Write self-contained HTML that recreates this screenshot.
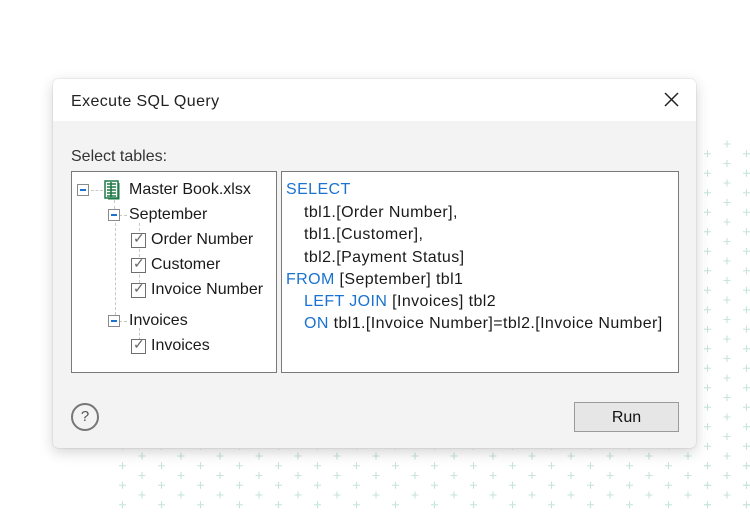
<!DOCTYPE html>
<html><head><style>
body{margin:0;width:750px;height:528px;background:#fff;position:relative;overflow:hidden;font-family:"Liberation Sans",sans-serif;color:#1a1a1a}
.a{position:absolute;white-space:nowrap}
#dlg{position:absolute;left:53px;top:79px;width:643px;height:369px;background:#f3f3f3;border-radius:5px;box-shadow:0 4px 14px rgba(0,0,0,0.18),0 0 1px rgba(0,0,0,0.3);overflow:hidden}
.t{font-size:16px;line-height:20px}
.s{letter-spacing:0.4px}
.kw{color:#1a73d0}
.cb{position:absolute;width:13px;height:13px;border:1px solid #6e6e6e;background:#fff}
.mn{position:absolute;width:10px;height:10px;border:1px solid #8a8a8a;background:#fff}
.mn:after{content:"";position:absolute;left:2px;top:4px;width:6px;height:2px;background:#1a73d0}
.vl{position:absolute;border-left:1px dashed #c8c8c8}
.hl{position:absolute;border-top:1px dashed #c8c8c8}
</style></head><body>
<svg class="a" style="left:0;top:0" width="750" height="528">
<defs><pattern id="p" x="142" y="456" width="39" height="19.5" patternUnits="userSpaceOnUse">
<path d="M-3.5 0H3.5M0 -3.5V3.5M35.5 0H42.5M39 -3.5V3.5M16 9.75H23M19.5 6.25V13.25M-3.5 19.5H3.5M0 16V23M35.5 19.5H42.5M39 16V23" stroke="#c6e3dc" stroke-width="1.1" fill="none"/>
</pattern></defs>
<rect x="698" y="140" width="52" height="370" fill="url(#p)"/>
<rect x="115" y="449" width="635" height="61" fill="url(#p)"/>
</svg>
<div id="dlg">
<div class="a" style="left:0;top:0;width:643px;height:42px;background:#fff"></div>
<div class="a t s" style="left:18px;top:13px;font-size:16px;color:#222">Execute SQL Query</div>
<svg class="a" style="left:611px;top:13px" width="15" height="15"><path d="M1 1L14 14M14 1L1 14" stroke="#222" stroke-width="1.5"/></svg>
<div class="a t" style="left:18px;top:68px;color:#333">Select tables:</div>
<div class="a" style="left:18px;top:92px;width:204px;height:200px;border:1px solid #7a7a7a;background:#fff"></div>
<div class="a" style="left:228px;top:92px;width:396px;height:200px;border:1px solid #7a7a7a;background:#fff"></div>
<div class="a" style="left:521px;top:323px;width:103px;height:28px;border:1px solid #9a9a9a;background:#e6e6e6"></div>
<div class="a t" style="left:521px;top:329px;width:105px;text-align:center;color:#111">Run</div>
<div class="a" style="left:18px;top:324px;width:24px;height:24px;border:2px solid #777;border-radius:50%;text-align:center;font-size:15px;line-height:24px;color:#555">?</div>
</div>
<!-- tree -->
<div class="vl" style="left:114px;top:200px;height:9px"></div>
<div class="vl" style="left:115px;top:223px;height:92px"></div>
<div class="vl" style="left:139px;top:223px;height:65px"></div>
<div class="vl" style="left:139px;top:328px;height:12px"></div>
<div class="hl" style="left:91px;top:190px;width:12px"></div>
<div class="hl" style="left:119px;top:215px;width:8px"></div>
<div class="hl" style="left:119px;top:321px;width:8px"></div>
<div class="mn" style="left:77px;top:184px"></div>
<svg class="a" style="left:104px;top:180px" width="16" height="20"><rect x="1" y="1" width="13" height="17" fill="#fff" stroke="#1e7a45" stroke-width="1.5"/><path d="M3 4h9M3 7h9M3 10h9M3 13h9M3 16h9M7 2v15" stroke="#1e7a45" stroke-width="1.6" fill="none"/><path d="M15 3v16H4" stroke="#1e7a45" stroke-width="1" fill="none"/></svg>
<div class="a t" style="left:129px;top:180px">Master Book.xlsx</div>
<div class="mn" style="left:108px;top:209px"></div>
<div class="a t" style="left:129px;top:205px">September</div>
<div class="cb" style="left:131px;top:233px"></div><div class="a" style="left:133px;top:230px;font-size:14px;color:#666">✓</div>
<div class="a t" style="left:151px;top:230px">Order Number</div>
<div class="cb" style="left:131px;top:258px"></div><div class="a" style="left:133px;top:255px;font-size:14px;color:#666">✓</div>
<div class="a t" style="left:151px;top:255px">Customer</div>
<div class="cb" style="left:131px;top:283px"></div><div class="a" style="left:133px;top:280px;font-size:14px;color:#666">✓</div>
<div class="a t" style="left:151px;top:280px">Invoice Number</div>
<div class="mn" style="left:108px;top:315px"></div>
<div class="a t" style="left:129px;top:311px">Invoices</div>
<div class="cb" style="left:131px;top:339px"></div><div class="a" style="left:133px;top:336px;font-size:14px;color:#666">✓</div>
<div class="a t" style="left:151px;top:336px">Invoices</div>
<!-- sql -->
<div class="a t s kw" style="left:286px;top:180px">SELECT</div>
<div class="a t s" style="left:304px;top:203px">tbl1.[Order Number],</div>
<div class="a t s" style="left:304px;top:225px">tbl1.[Customer],</div>
<div class="a t s" style="left:304px;top:248px">tbl2.[Payment Status]</div>
<div class="a t s" style="left:286px;top:270px"><span class="kw">FROM</span> [September] tbl1</div>
<div class="a t s" style="left:304px;top:292px"><span class="kw">LEFT JOIN</span> [Invoices] tbl2</div>
<div class="a t s" style="left:304px;top:314px"><span class="kw">ON</span> tbl1.[Invoice Number]=tbl2.[Invoice Number]</div>
</body></html>
